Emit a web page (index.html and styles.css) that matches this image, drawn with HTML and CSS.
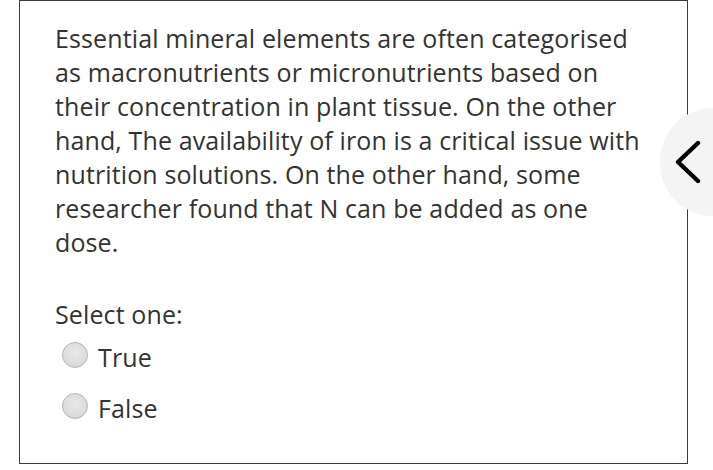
FILE: index.html
```html
<!DOCTYPE html>
<html lang="en">
  <head>
    <meta charset="UTF-8" />
    <meta name="viewport" content="width=device-width, initial-scale=1.0" />
    <title>Question</title>
    <link rel="stylesheet" href="styles.css">
  </head>
  <body>
    <div class="question">
      <p class="qtext">
        Essential mineral elements are often categorised as macronutrients or
        micronutrients based on their concentration in plant tissue. On the
        other hand, The availability of iron is a critical issue with nutrition
        solutions. On the other hand, some researcher found that N can be added
        as one dose.
      </p>

      <div class="prompt">Select one:</div>
      <div class="answers">
        <label class="answer"><input type="radio" name="q1" /> True</label>
        <label class="answer"><input type="radio" name="q1" /> False</label>
      </div>
    </div>

    <!-- drawer toggle, half circle on the right edge -->
    <button class="drawer-toggle" aria-label="Open drawer">
      <svg width="28" height="44" viewBox="0 0 28 44">
        <path d="M24 3 L4 22 L24 41" fill="none" stroke="#000" stroke-width="4.4" stroke-linecap="round" stroke-linejoin="round" />
      </svg>
    </button>
  </body>
</html>
```

FILE: styles.css
```css
body {
  margin: 0;
  background: #fff;
  font-family: "Open Sans", "Noto Sans", sans-serif;
  color: #333;
}

.question {
  box-sizing: border-box;
  width: 669px;
  height: 464px;
  margin-left: 19px;
  border: 1px solid #3a3a3a;
  padding: 20px 42px 0 35px;
  letter-spacing: 0.12px;
}

.qtext {
  margin: 0;
  font-size: 25px;
  line-height: 34px;
}

.prompt {
  margin-top: 38px;
  font-size: 25px;
  line-height: 34px;
}

.answers {
  display: flex;
  flex-direction: column;
  gap: 17px;
  margin-top: 9px;
  padding-left: 7px;
}

.answer {
  display: flex;
  align-items: center;
  gap: 10px;
  font-size: 25px;
  line-height: 34px;
}

.answer input {
  appearance: none;
  -webkit-appearance: none;
  width: 26px;
  height: 26px;
  margin: 0;
  border: 1px solid #b5b5b5;
  border-radius: 50%;
  background: radial-gradient(circle at 50% 40%, #e8e8e8 0%, #dcdcdc 60%, #cfcfcf 100%);
  position: relative;
  top: -2px;
}

.drawer-toggle {
  position: absolute;
  right: 0;
  top: 108px;
  width: 53px;
  height: 108px;
  border: none;
  border-radius: 54px 0 0 54px;
  background: #f4f4f4;
  padding: 0 0 0 14px;
  display: flex;
  align-items: center;
  cursor: pointer;
}
```
